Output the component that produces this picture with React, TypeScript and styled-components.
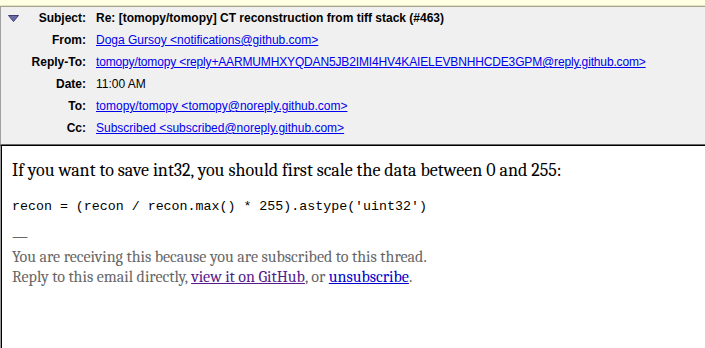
import React from "react";
import styled, { createGlobalStyle } from "styled-components";

const Global = createGlobalStyle`
  html, body { margin: 0; padding: 0; background: #ffffff; }
  #root { width: 705px; height: 348px; overflow: hidden; }
`;

const Frame = styled.div`
  width: 705px;
  height: 348px;
  display: flex;
  flex-direction: column;
`;

const InfoStrip = styled.div`
  height: 6px;
  background: #ffffe1;
  border-bottom: 1px solid #a3a38c;
  box-shadow: inset 0 -1px 0 #e4e4c8;
`;

const Header = styled.div`
  background: #f0f0f0;
  border-left: 1px solid #a0a0a0;
  border-bottom: 1px solid #6a6a6a;
  padding: 4px 0 9px 0;
  display: grid;
  grid-template-columns: 24px 61px auto;
  row-gap: 8px;
  font-family: Tahoma, "Liberation Sans", Arial, sans-serif;
  font-size: 12px;
  line-height: 14px;
  color: #000;
`;

const Toggle = styled.div`
  display: flex;
  align-items: center;
  padding-left: 7px;
`;

const Label = styled.div`
  font-weight: bold;
  text-align: right;
  white-space: nowrap;
`;

const Value = styled.div<{ $bold?: boolean }>`
  padding-left: 10px;
  white-space: nowrap;
  font-weight: ${(p) => (p.$bold ? "bold" : "normal")};
`;

const HeaderLink = styled.a<{ $tight?: boolean }>`
  color: #0000ee;
  text-decoration: underline;
  letter-spacing: ${(p) => (p.$tight ? "-0.15px" : "0")};
`;

const Body = styled.div`
  flex: 1;
  background: #ffffff;
  border-top: 1px solid #000;
  border-left: 1px solid #9a9a9a;
  box-shadow: inset 1px 0 0 #000;
  padding: 14px 12px 0 11px;
`;

const Lead = styled.p`
  margin: 0;
  font-family: Cambria, "Liberation Serif", "DejaVu Serif", serif;
  font-size: 18px;
  line-height: 22px;
  color: #000;
`;

const Code = styled.pre`
  margin: 16px 0 0 0;
  font-family: Consolas, "Liberation Mono", monospace;
  font-size: 13.3px;
  line-height: 18px;
  color: #000;
`;

const Footer = styled.div`
  margin-top: 11px;
  font-family: Cambria, "Liberation Serif", "DejaVu Serif", serif;
  font-size: 16px;
  line-height: 20px;
  color: #666666;
`;

const FooterLink = styled.a<{ $visited?: boolean }>`
  color: ${(p) => (p.$visited ? "#551a8b" : "#0000cc")};
  text-decoration: underline;
`;

const rows: { label: string; value: string; link?: boolean; tight?: boolean }[] = [
  { label: "From:", value: "Doga Gursoy <notifications@github.com>", link: true },
  {
    label: "Reply-To:",
    value:
      "tomopy/tomopy <reply+AARMUMHXYQDAN5JB2IMI4HV4KAIELEVBNHHCDE3GPM@reply.github.com>",
    link: true,
    tight: true,
  },
  { label: "Date:", value: "11:00 AM" },
  { label: "To:", value: "tomopy/tomopy <tomopy@noreply.github.com>", link: true },
  { label: "Cc:", value: "Subscribed <subscribed@noreply.github.com>", link: true },
];

export default function App() {
  return (
    <Frame>
      <Global />
      <InfoStrip />
      <Header>
        <Toggle>
          <svg width="11" height="7" viewBox="0 0 11 7">
            <path d="M0.5 0.5 L10.5 0.5 L5.5 6.5 Z" fill="#6a6aa8" stroke="#3c3c78" strokeWidth="1" />
          </svg>
        </Toggle>
        <Label>Subject:</Label>
        <Value $bold>Re: [tomopy/tomopy] CT reconstruction from tiff stack (#463)</Value>
        {rows.map((r) => (
          <React.Fragment key={r.label}>
            <span />
            <Label>{r.label}</Label>
            <Value>
              {r.link ? (
                <HeaderLink href="#" $tight={r.tight}>
                  {r.value}
                </HeaderLink>
              ) : (
                r.value
              )}
            </Value>
          </React.Fragment>
        ))}
      </Header>
      <Body>
        <Lead>If you want to save int32, you should first scale the data between 0 and 255:</Lead>
        <Code>recon = (recon / recon.max() * 255).astype('uint32')</Code>
        <Footer>
          —<br />
          You are receiving this because you are subscribed to this thread.
          <br />
          Reply to this email directly, <FooterLink href="#" $visited>view it on GitHub</FooterLink>, or{" "}
          <FooterLink href="#">unsubscribe</FooterLink>.
        </Footer>
      </Body>
    </Frame>
  );
}
